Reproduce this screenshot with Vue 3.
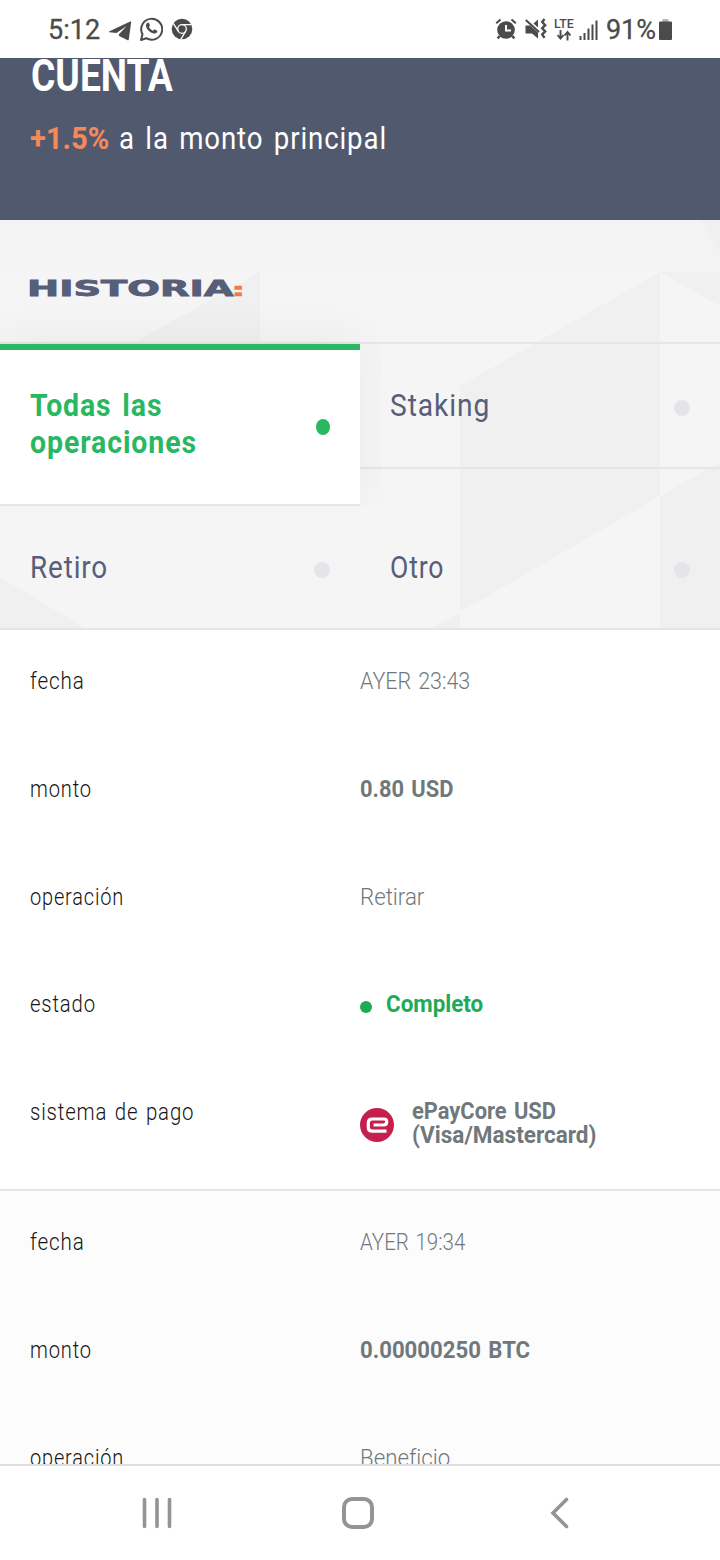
<script setup>
// Stretches or condenses a label so that it takes the given width in pixels,
// and reserves exactly that width in the surrounding row.
const fit = (el, { value }) => {
  const natural = el.offsetWidth
  el.style.transform = `scaleX(${value / natural})`
  el.style.marginRight = `${value - natural}px`
}
const vFit = { mounted: fit }

const tabs = [
  { lines: [['Todas las', 132], ['operaciones', 167]], active: true },
  { lines: [['Staking', 100]], short: true },
  { lines: [['Retiro', 78]] },
  { lines: [['Otro', 54]] },
]

const operations = [
  [
    { label: 'fecha', lw: 55, value: 'AYER 23:43', vw: 110 },
    { label: 'monto', lw: 62, value: '0.80 USD', vw: 93, kind: 'strong' },
    { label: 'operación', lw: 94, value: 'Retirar', vw: 64 },
    { label: 'estado', lw: 66, value: 'Completo', vw: 97, kind: 'complete' },
    { label: 'sistema de pago', lw: 164, kind: 'payment', lines: [['ePayCore USD', 144], ['(Visa/Mastercard)', 184]] },
  ],
  [
    { label: 'fecha', lw: 55, value: 'AYER 19:34', vw: 105 },
    { label: 'monto', lw: 62, value: '0.00000250 BTC', vw: 170, kind: 'strong' },
    { label: 'operación', lw: 94, value: 'Beneficio', vw: 90 },
  ],
]
</script>

<template>
  <div class="screen">
    <header class="status">
      <div class="status-left">
        <span v-fit="52" class="fit clock">5:12</span>
        <svg class="telegram" width="24" height="22" viewBox="0 0 24 22">
          <path d="M1 11.500 22.200 1.500c.8-.3 1 .1.9.9l-2.300 17c-.2 1-.8 1.200-1.600.7l-8-4 -.5-1.500 8-8.700L8.500 13 1.400 12.200z" fill="#4b4b4b" />
        </svg>
        <svg width="24" height="26" viewBox="0 0 24 26">
          <path d="M2 24 3.500 18.300A10.500 10.500 0 1 1 7.200 22.200Z" fill="none" stroke="#4b4b4b" stroke-width="2" stroke-linejoin="round" />
          <path d="M8.100 7c.7-.7 1.500-.7 1.900.2l.9 2.100c.2.5-1 1.500-.8 2 .9 1.700 2 2.700 3.700 3.400.6.2 1.400-1.600 2-1.300l2 1c.8.5.6 1.500 0 2.200-1.400 1.400-3.500 1.200-5.800 0C9.600 15.200 7.800 12.900 7.100 10.800 6.700 9.400 7.200 7.900 8.100 7Z" fill="#4b4b4b" />
        </svg>
        <svg class="chrome" width="22" height="22" viewBox="0 0 22 22">
          <circle cx="11" cy="11" r="10.300" fill="#4b4b4b" />
          <g fill="none" stroke="#fff" stroke-width="1.300">
            <circle cx="11" cy="11" r="4.300" />
            <path d="M11 6.700H20.300M7.300 13.200 2.200 5.300M14.700 13.200 9.800 21.300" />
          </g>
        </svg>
      </div>
      <div class="status-right">
        <svg width="22" height="22" viewBox="0 0 22 22">
          <circle cx="11" cy="12" r="8.800" fill="#4b4b4b" />
          <path d="M1.200 5.300 5.500 1.500M20.800 5.300 16.500 1.500" stroke="#4b4b4b" stroke-width="2" />
          <path d="M4.600 18 2.700 20.500M17.400 18l1.900 2.500" stroke="#4b4b4b" stroke-width="2.400" />
          <path d="M11 7v5.500h5" fill="none" stroke="#fff" stroke-width="2" />
        </svg>
        <svg class="mute" width="24" height="22" viewBox="0 0 24 22">
          <path d="M1.500 7.500H6L14 14.500V20.500L8 15.500H1.500ZM9.500 5.500 14 1.500V9.500Z" fill="#4b4b4b" />
          <path d="M1.800 2 15 14" stroke="#4b4b4b" stroke-width="2" />
          <path d="m20.500 1-2.300 3 3 3.200-3 3 3 3.200-3 3 2.300 3.500" fill="none" stroke="#4b4b4b" stroke-width="2.400" />
        </svg>
        <div class="lte">
          <span v-fit="20" class="fit lte-text">LTE</span>
          <svg width="16" height="11" viewBox="0 0 16 11">
            <path d="M4.500 0v8M1.500 5l3 3.500 3-3.500M11.500 10.500V2.500M8.500 5.500l3-3.500 3 3.500" fill="none" stroke="#4b4b4b" stroke-width="1.900" />
          </svg>
        </div>
        <svg class="signal" width="20" height="22" viewBox="0 0 20 22">
          <path d="M1.500 17v4M5.500 14v7M9.500 9.500V21M13.500 5.500V21M17.500 1.500V21" stroke="#4b4b4b" stroke-width="2" />
        </svg>
        <span v-fit="50" class="fit clock percent">91%</span>
        <svg class="battery" width="13" height="21" viewBox="0 0 13 21">
          <path d="M3.500 0h6v3h-6z" fill="#b5b5b5" />
          <rect y="2.500" width="13" height="18.500" rx="1" fill="#4b4b4b" />
        </svg>
      </div>
    </header>

    <section class="banner">
      <h1 class="banner-title"><span v-fit="142" class="fit">CUENTA</span></h1>
      <p class="banner-text">
        <b v-fit="79" class="fit bonus">+1.5%</b>
        <span v-fit="268" class="fit principal">a la monto principal</span>
      </p>
    </section>

    <section class="history">
      <svg class="facets" width="720" height="408" viewBox="0 220 720 408">
        <path d="M0 272H720V628H0Z" fill="#f5f5f5" />
        <path d="M700 220h20v32ZM260 272V344H132ZM660 272 460 386V612L660 496ZM660 272h60v34ZM660 496l60-34v166h-60ZM460 612v16h-28ZM0 577v51h85Z" fill="#f0f0f0" />
      </svg>
      <h2 class="history-title">
        <span v-fit="206" class="fit wide">HISTORIA</span><span v-fit="15" class="fit colon">:</span>
      </h2>
      <nav class="tabs">
        <a v-for="(tab, i) in tabs" :key="i" class="tab" :class="{ active: tab.active, short: tab.short }">
          <span class="tab-label">
            <span v-for="line in tab.lines" :key="line[0]" v-fit="line[1]" class="fit">{{ line[0] }}</span>
          </span>
          <i class="dot"></i>
        </a>
      </nav>
    </section>

    <main class="operations">
      <article v-for="(rows, i) in operations" :key="i" class="operation">
        <div v-for="row in rows" :key="row.label" class="row">
          <div class="label"><span v-fit="row.lw" class="fit">{{ row.label }}</span></div>
          <div class="value" :class="row.kind">
            <template v-if="row.kind === 'payment'">
              <svg class="epay" width="34" height="34" viewBox="0 0 34 34">
                <circle cx="17" cy="17" r="17" fill="#c5204d" />
                <path d="M26.500 23.200H12.500Q8.300 23.200 8.300 19.500V14.700Q8.300 11 12.500 11H24Q26.700 11 26.700 13.700 26.700 17 23.500 17H13.500" fill="none" stroke="#fff" stroke-width="3.200" />
              </svg>
              <span class="payment-name">
                <span v-for="line in row.lines" :key="line[0]" v-fit="line[1]" class="fit">{{ line[0] }}</span>
              </span>
            </template>
            <template v-else>
              <i v-if="row.kind === 'complete'" class="state-dot"></i>
              <span v-fit="row.vw" class="fit">{{ row.value }}</span>
            </template>
          </div>
        </div>
      </article>
    </main>

    <footer class="system-nav">
      <svg width="32" height="34" viewBox="0 0 32 34">
        <path d="M3.500 3.500v27M16 3.500v27M28.500 3.500v27" stroke="#949494" stroke-width="3.600" stroke-linecap="round" />
      </svg>
      <svg width="34" height="34" viewBox="0 0 34 34">
        <rect x="3" y="3" width="28" height="28" rx="8" fill="none" stroke="#949494" stroke-width="4" />
      </svg>
      <svg width="22" height="34" viewBox="0 0 22 34">
        <path d="M17.500 3.500 4 17l13.500 13.500" fill="none" stroke="#949494" stroke-width="3.600" stroke-linecap="round" />
      </svg>
    </footer>
  </div>
</template>

<style>
body { background: #fff; }
</style>

<style scoped>
.screen {
  width: 720px;
  height: 1560px;
  display: flex;
  flex-direction: column;
  overflow: hidden;
  background: #fff;
  font-family: Roboto, "Liberation Sans", sans-serif;
  font-variant-ligatures: none;
}
.fit {
  display: inline-block;
  flex: none;
  width: max-content;
  white-space: nowrap;
  transform-origin: left center;
}
svg { display: block; flex: none; }

.status {
  height: 58px;
  flex: none;
  display: flex;
  justify-content: space-between;
  box-sizing: border-box;
  padding: 0 48px;
  color: #4b4b4b;
}
.status-left, .status-right { display: flex; align-items: center; }
.clock {
  padding-top: 2px;
  font-size: 27px;
  line-height: 32px;
  -webkit-text-stroke: 0.300px #4b4b4b;
}
.telegram { margin: 3px 7px 0 8px; }
.chrome { margin-left: 8px; }
.mute { margin-left: 7px; }
.lte { width: 22px; margin-left: 6px; }
.lte-text { display: block; font-size: 13px; font-weight: 500; line-height: 13px; }
.lte svg { margin-left: 2px; }
.signal { margin: 1px 7px 0 3px; }
.battery { margin-left: 3px; }

.banner {
  height: 162px;
  flex: none;
  box-sizing: border-box;
  padding-left: 30px;
  background: #51596f;
  color: #fff;
  overflow: hidden;
}
.banner-title {
  margin: -6px 0 0 1px;
  font-size: 43.500px;
  line-height: 50px;
  font-weight: 700;
}
.banner-text {
  display: flex;
  margin: 18px 0 0;
  font-size: 31px;
  line-height: 38px;
}
.bonus { color: #f4895a; }
.principal { margin-left: 10px; letter-spacing: 1px; word-spacing: 3px; }

.history {
  position: relative;
  height: 410px;
  flex: none;
  box-sizing: border-box;
  background: #f3f3f3;
  border-bottom: 2px solid #e6e6e6;
}
.facets { position: absolute; inset: 0; }
.history-title {
  position: relative;
  display: flex;
  height: 122px;
  margin: 0;
  padding: 56px 0 0 27px;
  box-sizing: border-box;
  color: #565e79;
  font-family: "DejaVu Sans", sans-serif;
  line-height: 27px;
}
.wide { font-size: 20.500px; font-weight: 700; -webkit-text-stroke: 0.800px #565e79; }
.colon { margin-left: -2px; font-size: 17px; line-height: 28px; font-weight: 700; color: #ef7d4c; -webkit-text-stroke: 0.500px #ef7d4c; }
.tabs {
  position: relative;
  display: grid;
  grid-template-columns: 360px 360px;
  grid-template-rows: 162px 122px;
  border-top: 2px solid #e6e6e6;
}
.tab {
  box-sizing: border-box;
  display: flex;
  justify-content: space-between;
  align-items: flex-start;
  padding: 43px 30px 0;
  color: #565e79;
  font-size: 31px;
  line-height: 37px;
  letter-spacing: 1px;
}
.tab.short { height: 125px; border-bottom: 2px solid #e6e6e6; }
.tab.active {
  padding-top: 37px;
  background: #fff;
  color: #2ab762;
  font-weight: 700;
  word-spacing: 3px;
  border-top: 6px solid #2ab762;
  border-bottom: 2px solid #e6e6e6;
  box-shadow: 0 -6px 44px rgba(0, 0, 0, 0.05);
  clip-path: inset(-80px -22px 0 0);
}
.tab-label, .payment-name { display: flex; flex-direction: column; }
.dot {
  width: 16px;
  height: 16px;
  margin-top: 13px;
  border-radius: 50%;
  background: #e4e5e8;
}
.active .dot { width: 14px; margin-top: 32px; background: #2ab762; }

.operations { flex: 1; min-height: 0; overflow: hidden; }
.operation {
  height: 561px;
  box-sizing: border-box;
  border-bottom: 2px solid #e6e6e6;
}
.operation:nth-child(even) { background: #fcfcfc; }
.row {
  height: 107.750px;
  box-sizing: border-box;
  display: grid;
  grid-template-columns: 330px 1fr;
  padding: 39px 30px 0;
  font-size: 24px;
  line-height: 24px;
  word-spacing: 2px;
}
.label { color: #151515; font-weight: 300; letter-spacing: 1px; }
.value { display: flex; align-items: flex-start; color: #70787c; font-weight: 300; }
.value.strong, .value.payment { font-weight: 700; }
.value.complete { color: #1eab57; font-weight: 700; }
.state-dot { width: 12px; height: 12px; margin: 9px 14px 0 0; border-radius: 50%; background: #1eab57; }
.epay { margin: 8px 18px 0 0; }
.payment-name { margin-top: -1px; }

.system-nav {
  height: 96px;
  flex: none;
  box-sizing: border-box;
  display: flex;
  padding: 30px 0 0 141px;
  border-top: 2px solid #e0e0e0;
  background: #fff;
}
.system-nav svg:nth-child(2) { margin-left: 168px; }
.system-nav svg:nth-child(3) { margin-left: 174px; }
</style>
